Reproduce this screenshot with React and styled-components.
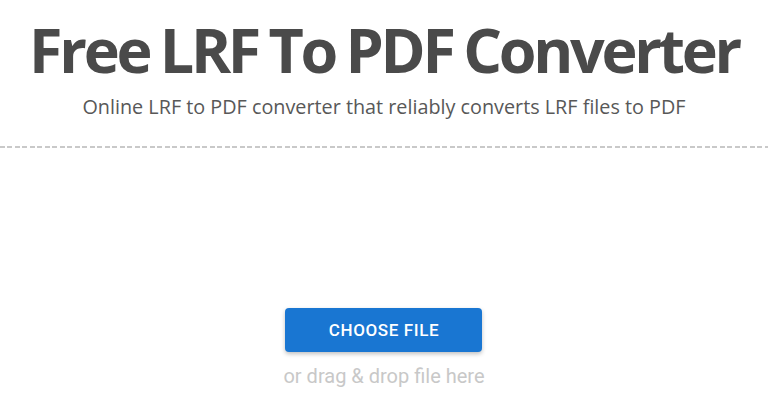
import React from "react";
import styled, { createGlobalStyle } from "styled-components";

const Global = createGlobalStyle`
  html, body { margin: 0; padding: 0; background: #fff; }
  body { font-family: "Open Sans", sans-serif; }
`;

const Page = styled.div`
  display: flex;
  flex-direction: column;
  align-items: center;
  width: 768px;
  overflow: hidden;
`;

const Header = styled.header`
  display: flex;
  flex-direction: column;
  align-items: center;
  padding-top: 8px;
  width: 100%;
`;

const Title = styled.h1`
  margin: 0;
  font-family: "Open Sans", sans-serif;
  font-weight: 700;
  font-size: 61px;
  line-height: 84px;
  letter-spacing: -3.3px;
  word-spacing: -2px;
  color: #4a4a4a;
  white-space: nowrap;
`;

const Subtitle = styled.p`
  margin: 1px 0 0;
  font-family: "Open Sans", sans-serif;
  font-size: 19.8px;
  line-height: 28px;
  color: #585858;
`;

/* thin dashed rule under the header */
const Divider = styled.div`
  width: 100%;
  height: 2px;
  margin-top: 25px;
  background: repeating-linear-gradient(
    to right,
    #c9c9c9 0,
    #c9c9c9 5px,
    transparent 5px,
    transparent 7.5px
  );
`;

const DropZone = styled.section`
  display: flex;
  flex-direction: column;
  align-items: center;
  padding-top: 160px;
`;

const ChooseButton = styled.button`
  width: 197px;
  height: 44px;
  border: none;
  border-radius: 4px;
  background: #1976d2;
  color: #fff;
  font-family: Roboto, sans-serif;
  font-weight: 500;
  font-size: 17px;
  letter-spacing: 0.6px;
  text-transform: uppercase;
  box-shadow: 0 2px 4px rgba(0, 0, 0, 0.25);
  cursor: pointer;
`;

const Hint = styled.p`
  margin: 12px 0 0;
  font-family: Roboto, sans-serif;
  font-size: 20px;
  line-height: 24px;
  color: #c8c8c8;
`;

export default function App() {
  return (
    <Page>
      <Global />
      <Header>
        <Title>Free LRF To PDF Converter</Title>
        <Subtitle>Online LRF to PDF converter that reliably converts LRF files to PDF</Subtitle>
      </Header>
      <Divider />
      <DropZone>
        <ChooseButton>Choose File</ChooseButton>
        <Hint>or drag &amp; drop file here</Hint>
      </DropZone>
    </Page>
  );
}
